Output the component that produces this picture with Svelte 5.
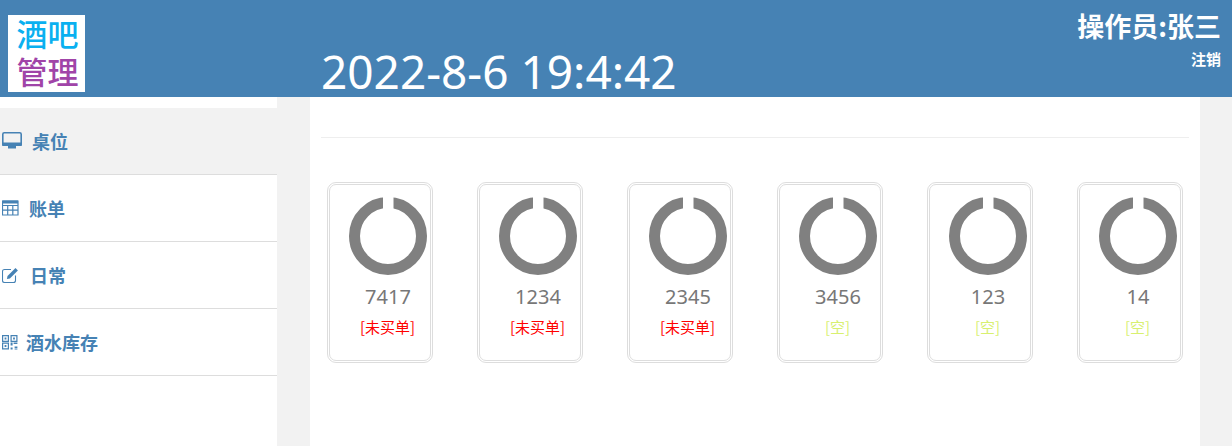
<script>
  const menu = [
    { label: '桌位', icon: 'monitor', active: true, gap: 'wide' },
    { label: '账单', icon: 'table', gap: 'mid' },
    { label: '日常', icon: 'edit', gap: 'snug' },
    { label: '酒水库存', icon: 'qr', gap: 'narrow' }
  ];

  const tables = [
    { no: '7417', status: '[未买单]', busy: true },
    { no: '1234', status: '[未买单]', busy: true },
    { no: '2345', status: '[未买单]', busy: true },
    { no: '3456', status: '[空]', busy: false },
    { no: '123', status: '[空]', busy: false },
    { no: '14', status: '[空]', busy: false }
  ];
</script>

<div class="page">
  <header class="topbar">
    <div class="logo">
      <span class="logo-top">酒吧</span>
      <span class="logo-bottom">管理</span>
    </div>
    <div class="clock">2022-8-6 19:4:42</div>
    <div class="user">
      <div class="operator">操作员:张三</div>
      <div class="logout">注销</div>
    </div>
  </header>

  <div class="body">
    <nav class="sidebar">
      {#each menu as item}
        <div class="menu-item {item.active ? 'active' : ''}">
          <svg class="icon" viewBox="0 0 20 20" width="20" height="20">
            {#if item.icon === 'monitor'}
              <rect x="0.8" y="1.8" width="18.4" height="12.4" rx="1.5" fill="none" stroke="#4682b4" stroke-width="1.6" />
              <rect x="0" y="11.5" width="20" height="3.5" rx="1" fill="#4682b4" />
              <rect x="6" y="15" width="8" height="2.5" fill="#4682b4" />
            {:else if item.icon === 'table'}
              <path d="M0.5 3h15.5v14H0.5zM0.5 7.5h15.5M0.5 12.2h15.5M5.7 7.5v9.5M10.8 7.5v9.5" fill="none" stroke="#4682b4" stroke-width="1.2" />
              <rect x="0.5" y="2.5" width="15.5" height="3" fill="#4682b4" />
            {:else if item.icon === 'edit'}
              <path d="M9 4.5H2.5a2 2 0 0 0-2 2v9a2 2 0 0 0 2 2h9a2 2 0 0 0 2-2v-5" fill="none" stroke="#4682b4" stroke-width="1.1" />
              <path d="M5.5 11l8-8 2.4 2.4-8 8-3 .6z" fill="#4682b4" />
            {:else}
              <path d="M0.6 3.6h5.8v5.8h-5.8zM9.1 3.6h5.8v5.8h-5.8zM0.6 11.1h5.8v5.8h-5.8z" fill="none" stroke="#4682b4" stroke-width="1.2" />
              <path d="M2.6 5.6h1.8v1.8h-1.8zM11.1 5.6h1.8v1.8h-1.8zM2.6 13.1h1.8v1.8h-1.8zM8.6 10.6h2v3h-2zM11.6 10.6h3.8v1.4h-3.8zM8.6 15.6h2v1.8h-2zM12.6 14.6h2.8v1.4h-2.8zM12.6 16.6h2.8v.8h-2.8z" fill="#4682b4" />
            {/if}
          </svg>
          <span class="label {item.gap}">{item.label}</span>
        </div>
      {/each}
    </nav>

    <main class="content">
      <hr class="rule" />
      <div class="tables">
        {#each tables as t}
          <div class="card">
            <svg class="ring" viewBox="0 0 78 78" width="78" height="78">
              <circle cx="39" cy="39" r="33.5" fill="none" stroke="#808080" stroke-width="11" />
              <rect x="34" y="0" width="10.5" height="13" fill="#fff" />
            </svg>
            <div class="no">{t.no}</div>
            <div class="status {t.busy ? 'busy' : 'free'}">{t.status}</div>
          </div>
        {/each}
      </div>
    </main>
  </div>
</div>

<style>
  :global(body) {
    margin: 0;
    background: #f2f2f2;
    font-family: "Noto Sans", "Noto Sans CJK SC", sans-serif;
  }

  .page {
    width: 1232px;
    height: 446px;
    overflow: hidden;
    display: flex;
    flex-direction: column;
  }

  .topbar {
    flex: none;
    height: 97px;
    background: #4682b4;
    display: flex;
    color: #fff;
  }

  .logo {
    flex: none;
    width: 77px;
    height: 77px;
    margin: 15px 0 0 8px;
    background: #fff;
    display: flex;
    flex-direction: column;
    align-items: center;
    font-family: "Noto Sans CJK SC", sans-serif;
    font-size: 31px;
    font-weight: 500;
    line-height: 38px;
    padding-left: 2px;
    box-sizing: border-box;
  }

  .logo-top {
    color: #0ab0f0;
    margin-top: -1px;
  }

  .logo-bottom {
    color: #a044a8;
  }

  .clock {
    flex: none;
    margin: 38px 0 0 236px;
    font-size: 46px;
    line-height: 66px;
    white-space: nowrap;
  }

  .user {
    margin-left: auto;
    padding: 8px 11px 0 0;
    text-align: right;
    font-weight: 700;
    font-family: "Noto Sans CJK SC", sans-serif;
  }

  .operator {
    font-size: 27px;
    line-height: 36px;
  }

  .logout {
    font-size: 15px;
    line-height: 20px;
    margin-top: 5px;
  }

  .body {
    flex: 1;
    display: flex;
    min-height: 0;
  }

  .sidebar {
    flex: none;
    width: 277px;
    background: #fff;
    padding-top: 11px;
    box-sizing: border-box;
  }

  .menu-item {
    height: 67px;
    box-sizing: border-box;
    border-bottom: 1px solid #ddd;
    display: flex;
    align-items: center;
    padding: 0 0 1px 2px;
    color: #4682b4;
  }

  .menu-item.active {
    background: #f2f2f2;
  }

  .icon {
    flex: none;
  }

  .label {
    font-family: "Noto Sans CJK SC", sans-serif;
    font-size: 18px;
    font-weight: 700;
  }

  .label.wide {
    margin-left: 10px;
  }

  .label.snug {
    margin-left: 8px;
  }

  .label.mid {
    margin-left: 7px;
  }

  .label.narrow {
    margin-left: 4px;
  }

  .content {
    flex: none;
    width: 890px;
    margin-left: 33px;
    background: #fff;
    padding: 40px 11px 0;
    box-sizing: border-box;
  }

  .rule {
    margin: 0;
    border: 0;
    border-top: 1px solid #eee;
  }

  .tables {
    display: flex;
    gap: 44px;
    margin: 44px 0 0 6px;
  }

  .card {
    flex: none;
    width: 106px;
    height: 181px;
    box-sizing: border-box;
    border: 3px double #ddd;
    border-radius: 9px;
    padding: 12px 0 0 15px;
    display: flex;
    flex-direction: column;
    align-items: center;
  }

  .ring {
    display: block;
  }

  .no {
    font-size: 20px;
    line-height: 28px;
    margin-top: 8px;
    padding-left: 1px;
    color: #777;
  }

  .status {
    font-family: "Noto Sans CJK SC", sans-serif;
    font-size: 15px;
    line-height: 20px;
    margin-top: 6px;
  }

  .status.busy {
    color: #f00;
  }

  .status.free {
    color: #d8f070;
  }
</style>
